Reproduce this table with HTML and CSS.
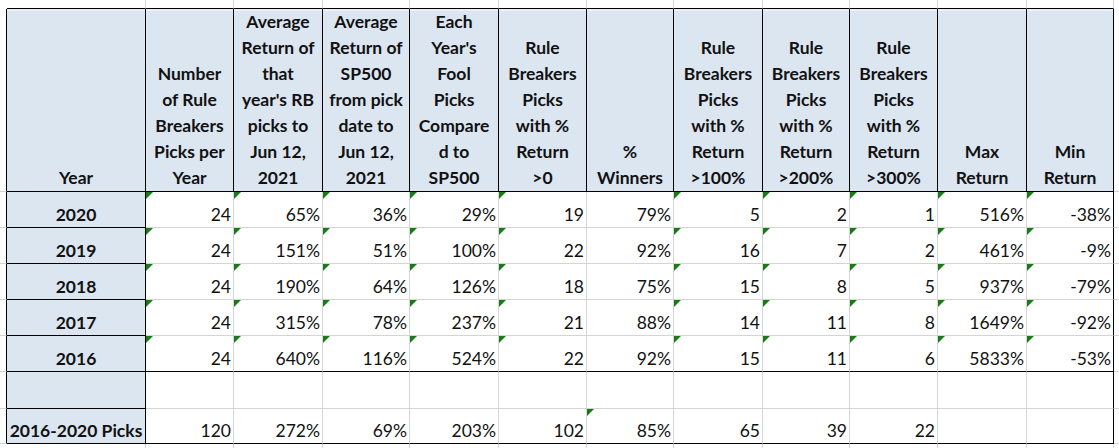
FILE: index.html
```html
<!DOCTYPE html>
<html>
<head>
<meta charset="utf-8">
<title>Rule Breakers Picks</title>
<link rel="stylesheet" href="styles.css">
</head>
<body>
<div class="sheet">
  <div class="row top">
    <div class="c"></div>
    <div></div><div></div><div></div><div></div><div></div><div></div>
    <div></div><div></div><div></div><div></div><div></div><div></div>
    <div class="c"></div>
  </div>
  <div class="row">
    <div class="l"></div>
    <div class="h">Year</div>
    <div class="h">Number<br>of Rule<br>Breakers<br>Picks per<br>Year</div>
    <div class="h">Average<br>Return of<br>that<br>year's RB<br>picks to<br>Jun 12,<br>2021</div>
    <div class="h">Average<br>Return of<br>SP500<br>from pick<br>date to<br>Jun 12,<br>2021</div>
    <div class="h">Each<br>Year's<br>Fool<br>Picks<br>Compare<br>d to<br>SP500</div>
    <div class="h">Rule<br>Breakers<br>Picks<br>with %<br>Return<br>&gt;0</div>
    <div class="h">%<br>Winners</div>
    <div class="h">Rule<br>Breakers<br>Picks<br>with %<br>Return<br>&gt;100%</div>
    <div class="h">Rule<br>Breakers<br>Picks<br>with %<br>Return<br>&gt;200%</div>
    <div class="h">Rule<br>Breakers<br>Picks<br>with %<br>Return<br>&gt;300%</div>
    <div class="h">Max<br>Return</div>
    <div class="h">Min<br>Return</div>
    <div class="r"></div>
  </div>
  <div class="row">
    <div class="l"></div>
    <div class="y">2020</div>
    <div class="d t">24</div>
    <div class="d t">65%</div>
    <div class="d t">36%</div>
    <div class="d t">29%</div>
    <div class="d t">19</div>
    <div class="d">79%</div>
    <div class="d t">5</div>
    <div class="d t">2</div>
    <div class="d t">1</div>
    <div class="d t">516%</div>
    <div class="d t">-38%</div>
    <div class="r"></div>
  </div>
  <div class="row">
    <div class="l"></div>
    <div class="y">2019</div>
    <div class="d t">24</div>
    <div class="d t">151%</div>
    <div class="d t">51%</div>
    <div class="d t">100%</div>
    <div class="d t">22</div>
    <div class="d">92%</div>
    <div class="d t">16</div>
    <div class="d t">7</div>
    <div class="d t">2</div>
    <div class="d t">461%</div>
    <div class="d t">-9%</div>
    <div class="r"></div>
  </div>
  <div class="row">
    <div class="l"></div>
    <div class="y">2018</div>
    <div class="d t">24</div>
    <div class="d t">190%</div>
    <div class="d t">64%</div>
    <div class="d t">126%</div>
    <div class="d t">18</div>
    <div class="d">75%</div>
    <div class="d t">15</div>
    <div class="d t">8</div>
    <div class="d t">5</div>
    <div class="d t">937%</div>
    <div class="d t">-79%</div>
    <div class="r"></div>
  </div>
  <div class="row">
    <div class="l"></div>
    <div class="y">2017</div>
    <div class="d t">24</div>
    <div class="d t">315%</div>
    <div class="d t">78%</div>
    <div class="d t">237%</div>
    <div class="d t">21</div>
    <div class="d">88%</div>
    <div class="d t">14</div>
    <div class="d t">11</div>
    <div class="d t">8</div>
    <div class="d t">1649%</div>
    <div class="d t">-92%</div>
    <div class="r"></div>
  </div>
  <div class="row end">
    <div class="l"></div>
    <div class="y">2016</div>
    <div class="d t">24</div>
    <div class="d t">640%</div>
    <div class="d t">116%</div>
    <div class="d t">524%</div>
    <div class="d t">22</div>
    <div class="d">92%</div>
    <div class="d t">15</div>
    <div class="d t">11</div>
    <div class="d t">6</div>
    <div class="d t">5833%</div>
    <div class="d t">-53%</div>
    <div class="r"></div>
  </div>
  <div class="row">
    <div class="l"></div>
    <div class="y"></div>
    <div class="d"></div>
    <div class="d"></div>
    <div class="d"></div>
    <div class="d"></div>
    <div class="d"></div>
    <div class="d"></div>
    <div class="d"></div>
    <div class="d"></div>
    <div class="d"></div>
    <div class="d"></div>
    <div class="d"></div>
    <div class="r"></div>
  </div>
  <div class="row end">
    <div class="l"></div>
    <div class="y">2016-2020 Picks</div>
    <div class="d">120</div>
    <div class="d">272%</div>
    <div class="d">69%</div>
    <div class="d">203%</div>
    <div class="d">102</div>
    <div class="d t">85%</div>
    <div class="d">65</div>
    <div class="d">39</div>
    <div class="d">22</div>
    <div class="d"></div>
    <div class="d"></div>
    <div class="r"></div>
  </div>
  <div class="row bottom">
    <div class="c"></div>
    <div></div><div></div><div></div><div></div><div></div><div></div>
    <div></div><div></div><div></div><div></div><div></div><div></div>
    <div class="c"></div>
  </div>
</div>
</body>
</html>
```

FILE: styles.css
```css
* {
  box-sizing: border-box;
}

html,
body {
  margin: 0;
  padding: 0;
  background: #ffffff;
}

body {
  font-family: Lato, "Liberation Sans", sans-serif;
  color: #111111;
}

.sheet {
  display: grid;
  grid-template-columns: 7px 139px 88px 89px 87px 89px 88px 87px 89px 87px 88px 89px 87px 5px;
  grid-template-rows: 9px 183px 36px 36px 36px 36px 36px 37px 35px 4px;
  width: 1119px;
  height: 448px;
  overflow: hidden;
}

.row {
  display: contents;
}

/* sheet gridlines outside the table */
.top > div {
  border-right: 1px solid #d4d4d4;
  border-bottom: 1px solid #000000;
}

.bottom > div {
  border-right: 1px solid #d4d4d4;
}

.top > .c,
.bottom > .c {
  border: 0;
}

.l {
  border-right: 1px solid #000000;
  border-bottom: 1px solid #d4d4d4;
}

.r {
  border-bottom: 1px solid #d4d4d4;
}

/* header cells */
.h {
  display: flex;
  flex-direction: column;
  justify-content: flex-end;
  align-items: center;
  background: #dce6f1;
  box-shadow: inset 0 2px 0 #e9eff7;
  border-right: 1px solid #000000;
  border-bottom: 1px solid #000000;
  font-size: 17.5px;
  font-weight: 700;
  line-height: 26px;
  text-align: center;
  white-space: nowrap;
}

/* year column */
.y {
  display: flex;
  align-items: flex-end;
  justify-content: center;
  padding-bottom: 1px;
  background: #dce6f1;
  border-right: 1px solid #000000;
  border-bottom: 1px solid #000000;
  font-size: 17.5px;
  font-weight: 700;
  line-height: 22px;
  white-space: nowrap;
}

/* data cells */
.d {
  position: relative;
  display: flex;
  align-items: flex-end;
  justify-content: flex-end;
  padding: 0 2px 1px 0;
  background: #ffffff;
  border-right: 1px solid #d4d4d4;
  border-bottom: 1px solid #d4d4d4;
  font-size: 17.5px;
  line-height: 22px;
  white-space: nowrap;
}

.row > .d:nth-child(13) {
  border-right-color: #000000;
}

.row.end > .d {
  border-bottom-color: #000000;
}

/* excel error-indicator triangle */
.t::before {
  content: "";
  position: absolute;
  left: 0;
  top: 0;
  width: 7px;
  height: 7px;
  background: #1a7a1a;
  clip-path: polygon(0 0, 100% 0, 0 100%);
}
```
